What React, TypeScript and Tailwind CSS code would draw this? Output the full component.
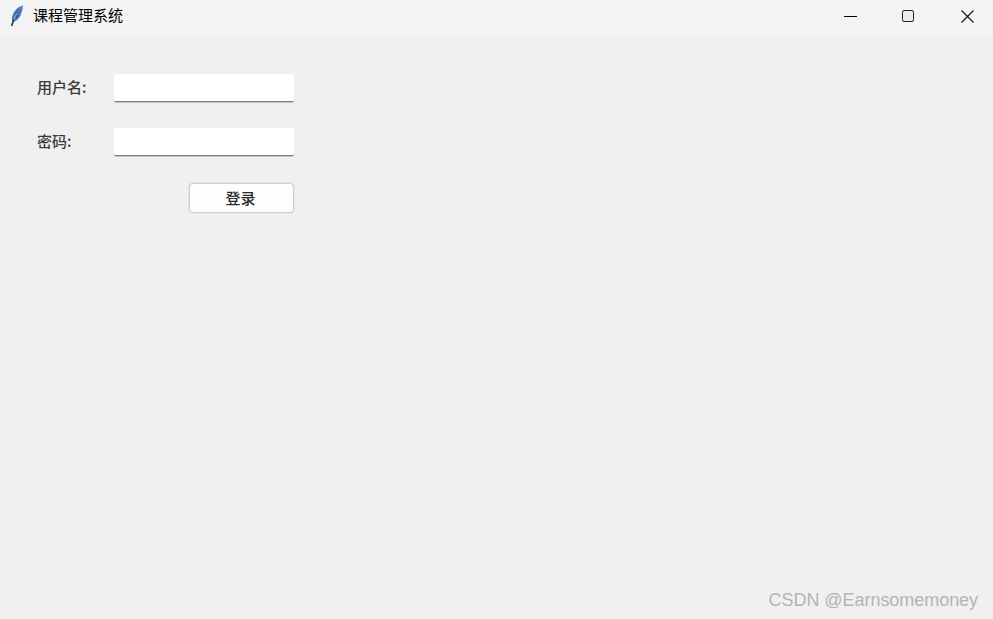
const cjk = "font-['Noto_Sans_CJK_SC','Liberation_Sans',sans-serif]";

function Feather() {
  return (
    <svg width="14" height="22" viewBox="0 0 14 22" className="shrink-0">
      <path d="M12.8 0.5C8.5 1.5 4 5.5 2.4 10.5C1.6 13 1.8 15.2 2.8 17C6.5 16.5 9.8 13 11.2 8.5C12.2 5.8 13 3 12.8 0.5Z" fill="#4a7cb8" />
      <path d="M12 2C9.5 3.2 6.5 6 4.8 10C5.6 8.8 6.8 8 8 7.5C7 9 6 10 5 11.5C6.2 11 7.5 10.6 8.6 10.2C7.4 12 6 13.5 4.4 14.6" fill="#27496f" />
      <path d="M11.8 2.2C8.6 5.6 5.8 9.8 4 14.5" stroke="#b9cfe6" strokeWidth="0.7" fill="none" />
      <path d="M3.6 14.5L1.8 21" stroke="#2f2f2f" strokeWidth="1.5" fill="none" />
    </svg>
  );
}

function Field({ label, className }: { label: string; className?: string }) {
  return (
    <div className={`flex items-center ${className ?? ''}`}>
      <label className={`w-[77px] -mt-[4px] text-[15px] font-medium leading-none text-[#3a3a3a] ${cjk}`}>{label}</label>
      <input
        type="text"
        className="w-[180px] h-[28px] bg-white rounded-[2px] border-b border-[#808080] shadow-[0_1px_0_#c4c4c4] outline-none"
      />
    </div>
  );
}

export default function App() {
  return (
    <div className="flex flex-col w-[993px] h-[619px] overflow-hidden bg-[#f0f0f0]">
      <div className="flex items-center justify-between h-[37px] pl-[10px] bg-[#f3f3f3]">
        <div className="flex items-center gap-[9px] -mt-[5px]">
          <Feather />
          <span className={`-mt-[4px] text-[15px] leading-none text-black ${cjk}`}>课程管理系统</span>
        </div>
        <div className="flex items-center -mt-[5px]">
          <div className="flex items-center justify-center w-[58px] h-[32px]">
            <div className="w-[13px] h-px bg-black" />
          </div>
          <div className="flex items-center justify-center w-[58px] h-[32px]">
            <div className="w-[12px] h-[12px] border border-[#222222] rounded-[2px] bg-[#ececec]" />
          </div>
          <div className="flex items-center justify-center w-[56px] h-[32px] pl-[4px]">
            <svg width="13" height="13" viewBox="0 0 13 13">
              <path d="M0.5 0.5L12.5 12.5M12.5 0.5L0.5 12.5" stroke="#111111" strokeWidth="1.1" fill="none" />
            </svg>
          </div>
        </div>
      </div>

      <div className="flex flex-col flex-1 pl-[37px] pt-[37px] pr-[15px] pb-[8px]">
        <Field label="用户名:" />
        <Field label="密码:" className="mt-[26px]" />
        <button
          className={`self-start ml-[152px] mt-[27px] w-[105px] h-[30px] pb-[2px] pr-[2px] bg-[#fdfdfd] border border-[#cfcfcf] shadow-[0_0_0_1px_#e4e4e4] rounded-[4px] text-[15px] font-medium leading-none text-[#2a2a2a] ${cjk}`}
        >
          登录
        </button>
        <div className="mt-auto self-end font-['Liberation_Sans',sans-serif] text-[18px] leading-[22px] tracking-[-0.05px] text-[#b4b4b4]">
          CSDN @Earnsomemoney
        </div>
      </div>
    </div>
  );
}
